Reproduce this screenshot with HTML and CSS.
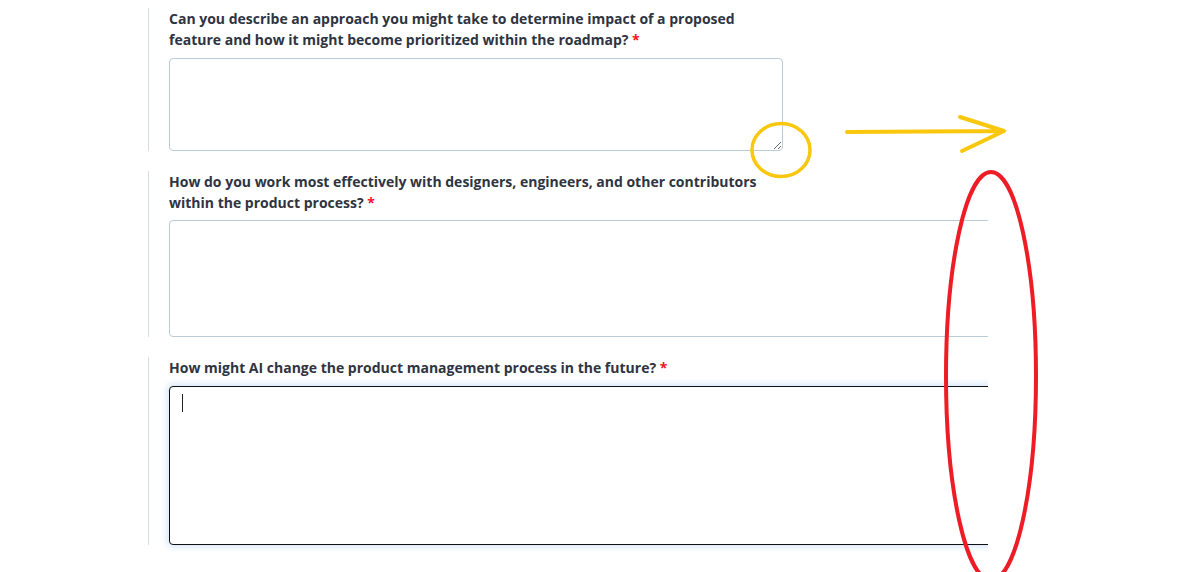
FILE: index.html
```html
<!DOCTYPE html>
<html lang="en">
<head>
<meta charset="utf-8">
<title>Questions</title>
<link rel="stylesheet" href="styles.css">
</head>
<body>
<div class="form">
  <div class="field">
    <label class="label">Can you describe an approach you might take to determine impact of a proposed feature and how it might become prioritized within the roadmap? <span class="req">*</span></label>
    <textarea class="box box-short"></textarea>
  </div>
  <div class="field">
    <label class="label">How do you work most effectively with designers, engineers, and other contributors within the product process? <span class="req">*</span></label>
    <textarea class="box box-wide box-mid"></textarea>
  </div>
  <div class="field">
    <label class="label">How might AI change the product management process in the future? <span class="req">*</span></label>
    <div class="box box-wide box-tall box-focus"><span class="caret"></span></div>
  </div>
</div>
<svg class="marks" width="1191" height="572" viewBox="0 0 1191 572">
  <ellipse cx="781" cy="150" rx="29" ry="26.5" fill="none" stroke="#f9c80e" stroke-width="3.5"/>
  <path d="M847 132 L1004 131 M960 117 L1004 131 L962 151" fill="none" stroke="#f9c80e" stroke-width="4" stroke-linecap="round" stroke-linejoin="round"/>
  <ellipse cx="991" cy="376" rx="45" ry="204" fill="none" stroke="#ee1c25" stroke-width="4"/>
</svg>
</body>
</html>
```
FILE: styles.css
```css
html, body {
  margin: 0;
  padding: 0;
  background: #ffffff;
}
body {
  font-family: "Open Sans", "Liberation Sans", sans-serif;
  width: 1191px;
  height: 572px;
  overflow: hidden;
  position: relative;
}
.form {
  margin: 8px 0 0 148px;
  width: 840px;
  overflow: hidden;
  display: flex;
  flex-direction: column;
  gap: 20px;
  padding-bottom: 8px;
}
.field {
  border-left: 1px solid #d3dde6;
  padding-left: 20px;
  display: flex;
  flex-direction: column;
  align-items: flex-start;
  gap: 7px;
}
.label {
  display: block;
  max-width: 600px;
  font-size: 14px;
  line-height: 21px;
  font-weight: 700;
  color: #2f3441;
}
.req {
  color: #f0141e;
}
.box {
  display: block;
  box-sizing: border-box;
  margin: 0;
  border: 1px solid #bccbd8;
  border-radius: 4px;
  background: #fff;
  padding: 7px 12px;
  font-family: inherit;
  font-size: 14px;
  outline: none;
}
.box-short {
  width: 614px;
  height: 93px;
  margin-top: 1px;
}
.box-wide {
  width: 960px;
  flex-shrink: 0;
}
.box-mid {
  height: 117px;
  resize: none;
}
.box-tall {
  height: 159px;
  margin-top: 1px;
}
.box-focus {
  border-color: #111;
  box-shadow: 0 0 7px 2px rgba(110, 165, 230, 0.3);
}
.caret {
  display: block;
  width: 1px;
  height: 18px;
  background: #222;
}
.marks {
  position: absolute;
  left: 0;
  top: 0;
  pointer-events: none;
}
```
